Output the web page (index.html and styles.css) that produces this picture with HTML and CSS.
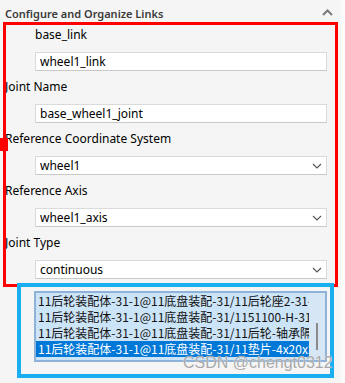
FILE: index.html
```html
<!DOCTYPE html>
<html>
<head>
<meta charset="utf-8">
<link rel="stylesheet" href="styles.css">
</head>
<body>
<div class="panel">
  <div class="header">
    <span class="title">Configure and Organize Links</span>
    <svg class="collapse" width="11" height="7" viewBox="0 0 11 7"><path d="M1 6 L5.5 1.5 L10 6" fill="none" stroke="#7a7a7a" stroke-width="2"/></svg>
  </div>
  <div class="form">
    <div class="field">
      <div class="label indent">base_link</div>
      <div class="input">wheel1_link</div>
    </div>
    <div class="field">
      <div class="label">Joint Name</div>
      <div class="input">base_wheel1_joint</div>
    </div>
    <div class="field">
      <div class="label">Reference Coordinate System</div>
      <div class="input select"><span>wheel1</span><svg class="chev" width="10" height="6" viewBox="0 0 10 6"><path d="M1 1 L5 5 L9 1" fill="none" stroke="#555" stroke-width="1.1"/></svg></div>
    </div>
    <div class="field">
      <div class="label">Reference Axis</div>
      <div class="input select"><span>wheel1_axis</span><svg class="chev" width="10" height="6" viewBox="0 0 10 6"><path d="M1 1 L5 5 L9 1" fill="none" stroke="#555" stroke-width="1.1"/></svg></div>
    </div>
    <div class="field">
      <div class="label">Joint Type</div>
      <div class="input select"><span>continuous</span><svg class="chev" width="10" height="6" viewBox="0 0 10 6"><path d="M1 1 L5 5 L9 1" fill="none" stroke="#555" stroke-width="1.1"/></svg></div>
    </div>
  </div>
  <div class="listwrap">
    <div class="list">
      <div class="rows">
        <div class="row">11后轮装配体-31-1@11底盘装配-31/11后轮座2-31-1</div>
        <div class="row">11后轮装配体-31-1@11底盘装配-31/1151100-H-31-1</div>
        <div class="row">11后轮装配体-31-1@11底盘装配-31/11后轮-轴承隔套</div>
        <div class="row sel">11后轮装配体-31-1@11底盘装配-31/11垫片-4x20x2</div>
      </div>
      <div class="scroll"><div class="thumb"></div></div>
    </div>
  </div>
  <div class="mark-red"></div>
  <div class="mark-red-tab"></div>
  <div class="mark-cyan"></div>
  <div class="watermark">CSDN @chengt0312</div>
</div>
</body>
</html>
```
FILE: styles.css
```css
* { box-sizing: border-box; }
html, body { margin: 0; padding: 0; }
body {
  width: 345px;
  height: 383px;
  overflow: hidden;
  background: #f5f5f5;
  font-family: "Noto Sans", "Noto Sans CJK SC", sans-serif;
  font-size: 12px;
  color: #000;
}
.panel {
  position: relative;
  width: 345px;
  height: 383px;
  border-right: 4px solid #fbfbfb;
}
.header {
  display: flex;
  align-items: center;
  justify-content: space-between;
  height: 24px;
  padding: 2px 8px 0 5px;
}
.title {
  font-weight: 600;
  color: #3b3b3b;
  font-size: 11px;
}
.collapse { margin-top: -2px; }
.form {
  display: flex;
  flex-direction: column;
  padding-top: 3px;
}
.field {
  display: flex;
  flex-direction: column;
  margin-bottom: 8px;
}
.label {
  height: 16px;
  line-height: 16px;
  padding-left: 5px;
  margin-bottom: 9px;
}
.label.indent { padding-left: 35px; }
.input {
  margin-left: 35px;
  width: 292px;
  height: 19px;
  background: #fff;
  border: 1px solid #dadada;
  border-bottom-color: #c8c8c8;
  padding-left: 4px;
  line-height: 17px;
  display: flex;
  align-items: center;
  justify-content: space-between;
}
.select { padding-right: 4px; }
.chev { display: block; }
.listwrap {
  position: absolute;
  left: 21px;
  top: 287px;
  width: 309px;
  height: 87px;
  padding: 4px 0 0 13px;
}
.list {
  display: flex;
  width: 293px;
  height: 71px;
  border: 2px solid #8fb3d8;
  background: #cce4f7;
}
.rows {
  flex: 1;
  overflow: hidden;
}
.row {
  height: 16px;
  line-height: 16px;
  padding-left: 2px;
  white-space: nowrap;
  overflow: hidden;
  font-family: "Noto Sans CJK SC", sans-serif;
  font-size: 12px;
  color: #111;
}
.row.sel {
  background: #0078d7;
  color: #fff;
}
.scroll {
  width: 16px;
  display: flex;
  justify-content: center;
  padding-top: 30px;
  background: #d6e6f4;
}
.thumb {
  width: 2px;
  height: 27px;
  background: #8a8a8a;
}
.mark-red {
  position: absolute;
  left: 3px;
  top: 22px;
  width: 335px;
  height: 265px;
  border: 3px solid #ff0000;
}
.mark-red-tab {
  position: absolute;
  left: 0;
  top: 138px;
  width: 8px;
  height: 13px;
  background: #ff0000;
}
.mark-cyan {
  position: absolute;
  left: 17px;
  top: 283px;
  width: 317px;
  height: 95px;
  border: 4px solid #19aef0;
}
.watermark {
  position: absolute;
  left: 183px;
  top: 354px;
  font-family: "Liberation Sans", sans-serif;
  font-size: 16px;
  color: #a8a8a8;
  text-shadow: 0 0 1px #fff;
  white-space: nowrap;
}
```
